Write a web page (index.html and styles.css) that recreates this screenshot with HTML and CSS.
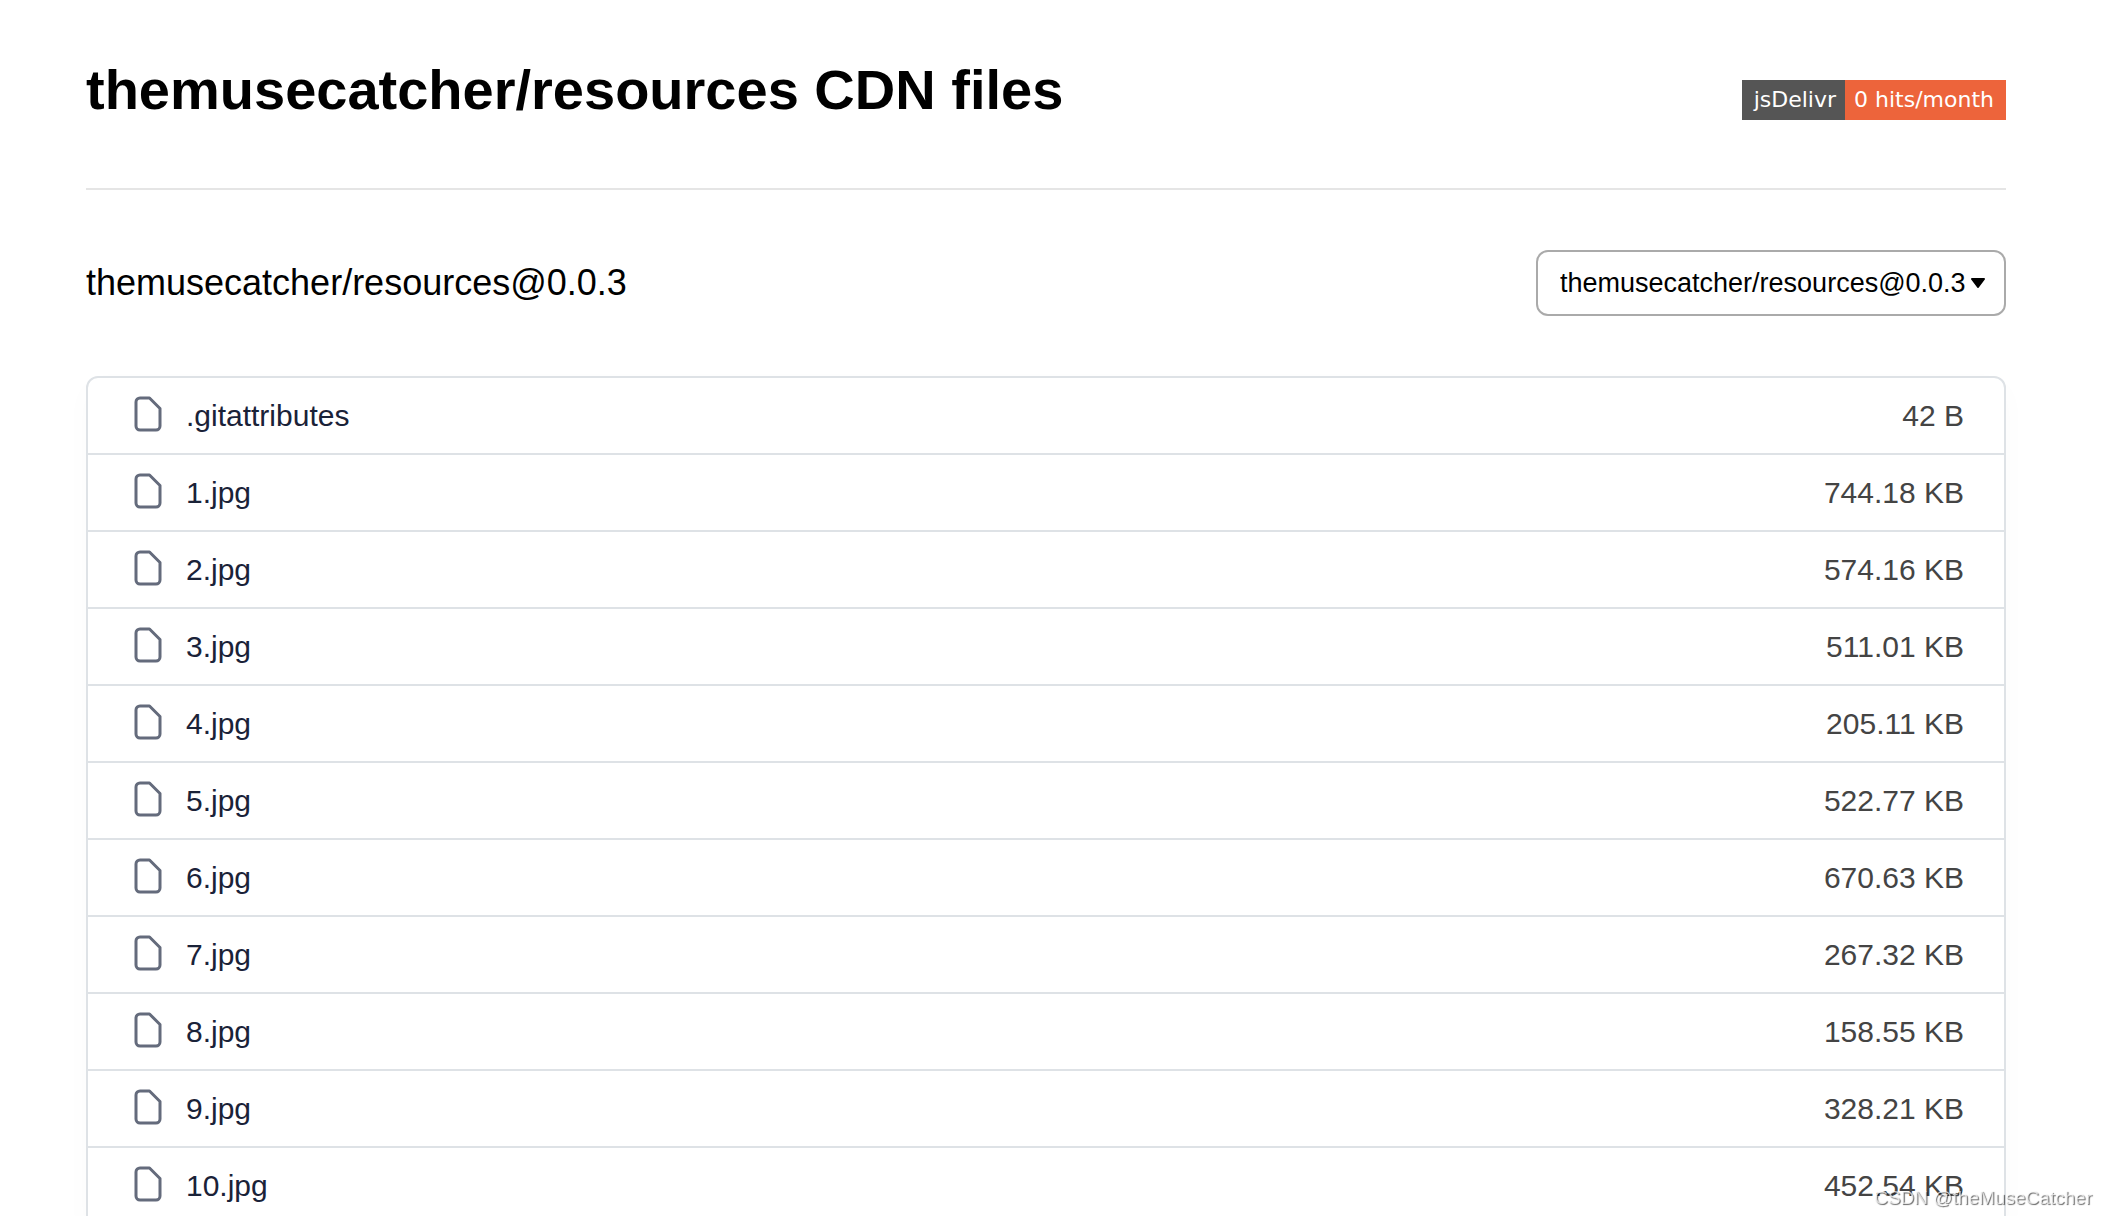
FILE: index.html
```html
<!DOCTYPE html>
<html lang="en">
<head>
    <meta charset="UTF-8">
    <meta name="viewport" content="width=device-width, initial-scale=1.0">
    <title>themusecatcher/resources CDN files</title>
    <link rel="stylesheet" href="styles.css">
</head>
<body>
    <svg class="sprite" width="0" height="0" aria-hidden="true">
        <symbol id="file" viewBox="0 0 28 40">
            <path d="M6 2H15.5L26 12.5V30A4 4 0 0 1 22 34H6A4 4 0 0 1 2 30V6A4 4 0 0 1 6 2Z" fill="none" stroke="#646b7c" stroke-width="3" stroke-linejoin="round"/>
        </symbol>
    </svg>
    <div class="container">
        <header class="header">
            <h1>themusecatcher/resources CDN files</h1>
            <a class="badge" href="#stats"><span class="badge-name">jsDelivr</span><span class="badge-hits">0 hits/month</span></a>
        </header>
        <div class="toolbar">
            <label class="package" for="version">themusecatcher/resources@0.0.3</label>
            <div class="select">
                <select id="version">
                    <option>themusecatcher/resources@0.0.3</option>
                </select>
                <svg class="arrow" viewBox="0 0 16 10" width="16" height="10" aria-hidden="true">
                    <path d="M2 1H14L8 9Z" stroke="#000" stroke-width="2" stroke-linejoin="round"/>
                </svg>
            </div>
        </div>
        <table class="files">
            <tbody>
                <tr><td><a href="#.gitattributes"><svg class="icon"><use href="#file"/></svg>.gitattributes</a></td><td class="size">42 B</td></tr>
                <tr><td><a href="#1.jpg"><svg class="icon"><use href="#file"/></svg>1.jpg</a></td><td class="size">744.18 KB</td></tr>
                <tr><td><a href="#2.jpg"><svg class="icon"><use href="#file"/></svg>2.jpg</a></td><td class="size">574.16 KB</td></tr>
                <tr><td><a href="#3.jpg"><svg class="icon"><use href="#file"/></svg>3.jpg</a></td><td class="size">511.01 KB</td></tr>
                <tr><td><a href="#4.jpg"><svg class="icon"><use href="#file"/></svg>4.jpg</a></td><td class="size">205.11 KB</td></tr>
                <tr><td><a href="#5.jpg"><svg class="icon"><use href="#file"/></svg>5.jpg</a></td><td class="size">522.77 KB</td></tr>
                <tr><td><a href="#6.jpg"><svg class="icon"><use href="#file"/></svg>6.jpg</a></td><td class="size">670.63 KB</td></tr>
                <tr><td><a href="#7.jpg"><svg class="icon"><use href="#file"/></svg>7.jpg</a></td><td class="size">267.32 KB</td></tr>
                <tr><td><a href="#8.jpg"><svg class="icon"><use href="#file"/></svg>8.jpg</a></td><td class="size">158.55 KB</td></tr>
                <tr><td><a href="#9.jpg"><svg class="icon"><use href="#file"/></svg>9.jpg</a></td><td class="size">328.21 KB</td></tr>
                <tr><td><a href="#10.jpg"><svg class="icon"><use href="#file"/></svg>10.jpg</a></td><td class="size">452.54 KB</td></tr>
            </tbody>
        </table>
    </div>
    <div class="watermark">CSDN @theMuseCatcher</div>
</body>
</html>
```
FILE: styles.css
```css
* {
    box-sizing: border-box;
}
body {
    margin: 0;
    height: 100vh;
    overflow: hidden;
    background: #fff;
    color: #000;
    font-family: "Liberation Sans", Arial, sans-serif;
}
.sprite {
    position: absolute;
}
.container {
    padding: 0 100px 0 86px;
}
.header {
    display: flex;
    justify-content: space-between;
    align-items: flex-end;
    padding: 60px 0 68px;
    border-bottom: 2px solid #e5e5e5;
}
h1 {
    margin: 0;
    font-size: 56px;
    line-height: 60px;
}
.badge {
    display: flex;
    color: #fff;
    font-family: "DejaVu Sans", Verdana, sans-serif;
    font-size: 22px;
    line-height: 40px;
    text-decoration: none;
}
.badge-name {
    padding: 0 9px 0 12px;
    background: #555;
}
.badge-hits {
    padding: 0 12px 0 9px;
    background: #ed643b;
}
.toolbar {
    display: flex;
    justify-content: space-between;
    align-items: center;
    padding: 60px 0;
}
.package {
    font-size: 36px;
}
.select {
    position: relative;
}
select {
    display: block;
    height: 66px;
    padding: 0 38px 0 22px;
    appearance: none;
    border: 2px solid #aaa;
    border-radius: 12px;
    background: #fff;
    color: #000;
    font-family: inherit;
    font-size: 27px;
}
.arrow {
    position: absolute;
    right: 20px;
    top: 28px;
    pointer-events: none;
}
.files {
    width: 100%;
    border: 2px solid #dee2e6;
    border-radius: 12px;
    border-spacing: 0;
    box-shadow: 0 10px 30px rgba(0, 0, 0, 0.02);
    font-size: 30px;
}
.files td {
    height: 77px;
    padding: 0 40px 0 46px;
    border-bottom: 2px solid #dee2e6;
}
.files a {
    display: flex;
    align-items: center;
    gap: 24px;
    color: #1a2238;
    text-decoration: none;
}
.icon {
    width: 28px;
    height: 40px;
}
.files .size {
    color: #444;
    text-align: right;
}
.watermark {
    position: fixed;
    right: 14px;
    bottom: 6px;
    color: rgba(255, 255, 255, 0.7);
    font-size: 19px;
    line-height: 24px;
    text-shadow: 1px 1px 1px rgba(0, 0, 0, 0.6);
}
```
